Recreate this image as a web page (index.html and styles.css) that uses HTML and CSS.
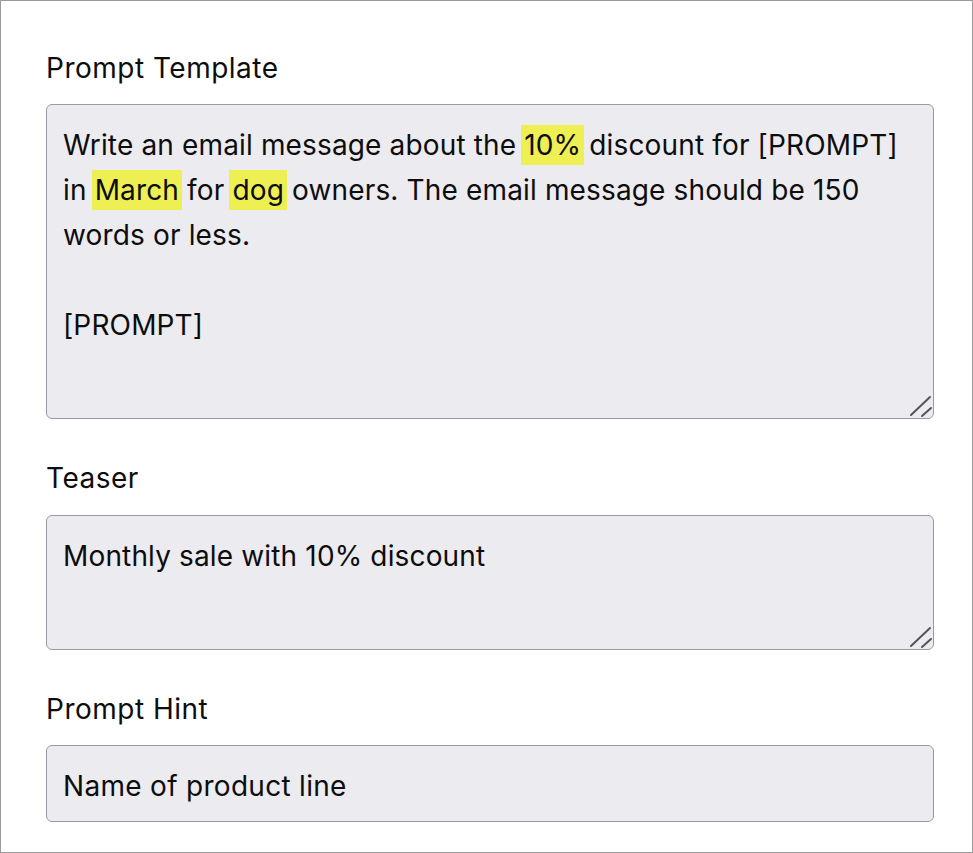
FILE: index.html
```html
<!DOCTYPE html>
<html>
<head>
<meta charset="utf-8">
<link rel="stylesheet" href="styles.css">
</head>
<body>
<div class="frame">
  <div class="field first">
    <div class="label">Prompt Template</div>
    <div class="box tall">Write an email message about the <span class="hl">10%</span> discount for [PROMPT] in <span class="hl">March</span> for <span class="hl">dog</span> owners. The email message should be 150 words or less.<br><br>[PROMPT]<svg class="grip" width="24" height="24" viewBox="0 0 24 24"><path d="M2 21 L21 3 M13 22 L22 14"/></svg></div>
  </div>
  <div class="field">
    <div class="label">Teaser</div>
    <div class="box short">Monthly sale with 10% discount<svg class="grip" width="24" height="24" viewBox="0 0 24 24"><path d="M2 21 L21 3 M13 22 L22 14"/></svg></div>
  </div>
  <div class="field">
    <div class="label">Prompt Hint</div>
    <div class="box input">Name of product line</div>
  </div>
</div>
</body>
</html>
```
FILE: styles.css
```css
html, body {
  margin: 0;
  padding: 0;
  background: #fff;
}
body {
  font-family: Inter, "Noto Sans", sans-serif;
  color: #0d0d0d;
}
.frame {
  box-sizing: border-box;
  width: 973px;
  height: 853px;
  border: 1px solid #9b9b9b;
  padding: 49px 38px 0 45px;
  overflow: hidden;
}
.field {
  margin-top: 41px;
}
.field.first {
  margin-top: 0;
}
.label {
  font-size: 28px;
  line-height: 36px;
  letter-spacing: 0.5px;
  margin-bottom: 18.5px;
}
.field.first .label {
  margin-bottom: 18px;
}
.box {
  position: relative;
  box-sizing: border-box;
  background: #ecebf0;
  border: 1px solid #9b99a8;
  border-radius: 6px;
  font-size: 28px;
  line-height: 45px;
  letter-spacing: 0.15px;
  padding: 18px 16px 17px;
}
.tall {
  height: 315px;
}
.short {
  height: 135px;
}
.input {
  height: 77px;
  padding-top: 18px;
  letter-spacing: 0.3px;
}
.hl {
  background: #edef52;
  box-shadow: 0 0 0 3px #edef52;
}
.grip {
  position: absolute;
  right: 0;
  bottom: 0;
}
.grip path {
  stroke: #555;
  stroke-width: 2;
  stroke-linecap: round;
  fill: none;
}
```
